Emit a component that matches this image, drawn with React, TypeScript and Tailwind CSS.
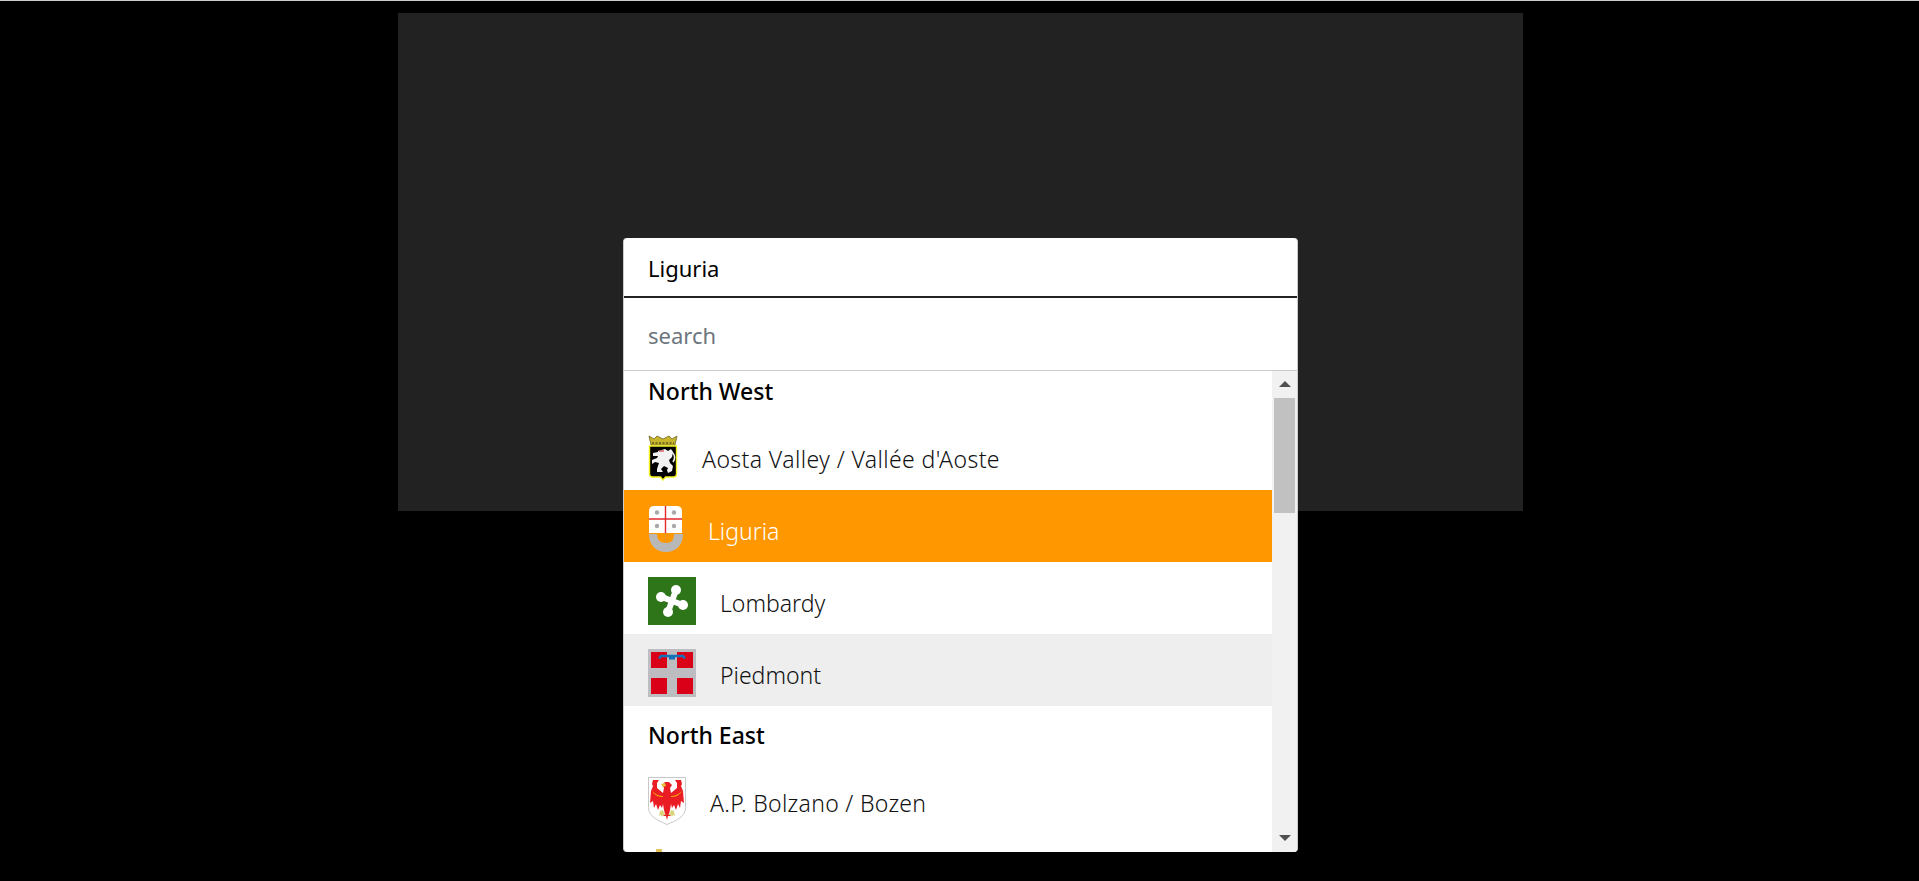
import React from "react";

function AostaIcon() {
  return (
    <svg width="30" height="48" viewBox="0 0 30 48" className="shrink-0">
      <path d="M1 3l5 3 3-3 6 3 6-3 3 3 5-3-2 9H3z" fill="#c9b52c" stroke="#6b6420" strokeWidth="0.8" />
      <path d="M4 10h22" stroke="#5c5a20" strokeWidth="1.500" strokeDasharray="2 1.500" />
      <path d="M1.500 13h27v28c0 2-1 3-3 3h-8l-2.500 3-2.500-3h-8c-2 0-3-1-3-3z" fill="#000" stroke="#f4ef1c" strokeWidth="1.400" />
      <path d="M10 18l7-2 3 2 3-2 2 3-1 5-3 3 1 3 3 3-1 5-4 2-1-3 1-2-4-2-3 3 2 3-6 0 0-3 2-6-4-1-3 2 0-4 5-2 1-2-5 0 0-3 5-1z" fill="#f2f2f2" />
      <path d="M11 18h5" stroke="#c22" strokeWidth="1" />
      <path d="M24 19c3 3 3 7 1 10" stroke="#f2f2f2" strokeWidth="1.500" fill="none" />
    </svg>
  );
}

function LiguriaIcon() {
  return (
    <svg width="36" height="48" viewBox="0 0 36 48" className="shrink-0">
      <path d="M1 6c0-3 2-5 5-5h23c3 0 5 2 5 5v22H1z" fill="#fff" />
      <path d="M17.500 1v27M1 14h33" stroke="#e22a2a" strokeWidth="1.400" />
      <path d="M1 29h8c0 6 3 9 9 9s8-3 8-9h9c0 11-7 18-17 18S1 40 1 29z" fill="#b8b8b8" />
      <path d="M17.500 29v9" stroke="#d99b3a" strokeWidth="0.800" />
      <g fill="#a9a9a9">
        <circle cx="9" cy="7.500" r="2.200" />
        <circle cx="26" cy="7.500" r="2.200" />
        <circle cx="9" cy="21" r="2.200" />
        <circle cx="26" cy="21" r="2.200" />
      </g>
    </svg>
  );
}

function LombardyIcon() {
  return (
    <svg width="48" height="48" viewBox="0 0 48 48" className="shrink-0">
      <rect width="48" height="48" fill="#2e7519" />
      <path d="M24 24L14 20M24 24L28 13M24 24L20 35M24 24L35 28" stroke="#fff" strokeWidth="6" strokeLinecap="round" />
      <g fill="#fff">
        <circle cx="13" cy="20" r="5" />
        <circle cx="28" cy="13" r="5" />
        <circle cx="20" cy="35" r="5" />
        <circle cx="35" cy="28" r="5" />
      </g>
    </svg>
  );
}

function PiedmontIcon() {
  return (
    <svg width="48" height="48" viewBox="0 0 48 48" className="shrink-0">
      <rect width="48" height="48" fill="#bdbcc0" />
      <rect x="3" y="3" width="16" height="16" fill="#d90018" />
      <rect x="29" y="3" width="16" height="16" fill="#d90018" />
      <rect x="3" y="29" width="16" height="16" fill="#d90018" />
      <rect x="29" y="29" width="16" height="16" fill="#d90018" />
      <path d="M11 9.500L13 7H35L37 9.500" stroke="#1672b8" strokeWidth="2.500" fill="none" />
      <rect x="21" y="7" width="6" height="3.500" fill="#1672b8" />
    </svg>
  );
}

function BolzanoIcon() {
  return (
    <svg width="38" height="48" viewBox="0 0 38 48" className="shrink-0">
      <path d="M.5.500h37v30c0 9-9 13-18.500 17C10 43.500.5 39.500.5 30.500z" fill="#fff" stroke="#c8c8c8" />
      <path
        d="M17 5L21 5L24 8L22 11L23 16L29 11L29 6L27 3L33 3L34 7L33 9L35 14L36 26L33 24L32 31L30 27L28 33L26 28L24 31L23 27L22 33L21 37L23 39L20 39L19 43L18 39L15 39L17 37L16 33L15 27L14 31L12 28L10 33L8 27L6 31L5 24L2 26L3 14L5 9L4 7L5 3L11 3L9 6L9 11L15 16L16 11L14 8Z"
        fill="#ea1c24"
      />
      <path d="M4 14c4 4 8 5 11 5l0 1c-4 0-8-1-11-6zM34 14c-4 4-8 5-11 5l0 1c4 0 8-1 11-6z" fill="#f5a800" />
      <path d="M13 7l4-1 1 3-3 1z" fill="#e8c23a" />
      <path d="M12 34l3-1 1 3 2 2-3 0-1 2-1-2-2 1zM26 34l-3-1-1 3-2 2 3 0 1 2 1-2 2 1z" fill="#d8d47a" />
    </svg>
  );
}

function Region({
  icon,
  name,
  className = "",
}: {
  icon: React.ReactNode;
  name: string;
  className?: string;
}) {
  return (
    <div className={`flex h-[72px] items-start pl-6 pt-[15px] text-[23px] font-light text-[#111111] ${className}`}>
      {icon}
      <span className="ml-6 mt-[11px] leading-[30px]">{name}</span>
    </div>
  );
}

export default function App() {
  return (
    <div className="relative h-[881px] overflow-hidden border-t border-[#cccccc] bg-black font-['Noto_Sans','Open_Sans',sans-serif]">
      <div className="ml-[398px] mt-3 h-[498px] w-[1125px] bg-[#222222]" />

      {/* Select dropdown, open over the panel */}
      <div className="absolute left-[623px] top-[237px] flex h-[614px] w-[675px] flex-col overflow-hidden rounded-[4px] border-x border-[#cccccc] bg-white">
        <div className="flex h-[58px] shrink-0 items-center pl-6 pt-[3px] text-[22px] text-black">
          Liguria
        </div>
        <div className="h-[2px] shrink-0 bg-[#222222]" />
        <div className="flex h-[73px] shrink-0 items-center border-b border-[#cccccc] pl-6 pt-[2px]">
          <input
            placeholder="search"
            className="w-full bg-transparent text-[22px] outline-none placeholder:text-[#6c757d]"
          />
        </div>

        <div className="flex min-h-0 flex-1">
          <div className="min-w-0 flex-1 overflow-hidden">
            <div className="h-[47px] pl-6 pt-[3px] text-[23px] font-medium leading-[34px] text-black">
              North West
            </div>
            <Region icon={<AostaIcon />} name="Aosta Valley / Vallée d'Aoste" className="tracking-[0.4px]" />
            <Region icon={<LiguriaIcon />} name="Liguria" className="bg-[#ff9800] !text-white" />
            <Region icon={<LombardyIcon />} name="Lombardy" />
            <Region icon={<PiedmontIcon />} name="Piedmont" className="bg-[#eeeeee]" />
            <div className="h-[56px] pl-6 pt-[12px] text-[23px] font-medium leading-[34px] text-black">
              North East
            </div>
            <Region icon={<BolzanoIcon />} name="A.P. Bolzano / Bozen" className="tracking-[0.3px]" />
            {/* top of the next crest, the rest is scrolled out of view */}
            <div className="pl-[32px] pt-[15px]">
              <div className="h-[3px] w-[6px] bg-[#e3c35a]" />
            </div>
          </div>

          {/* Scrollbar */}
          <div className="flex w-[25px] shrink-0 flex-col items-center bg-[#f1f1f1]">
            <div className="flex h-[25px] shrink-0 items-center justify-center">
              <div className="h-0 w-0 border-x-[6px] border-b-[6px] border-x-transparent border-b-[#505050]" />
            </div>
            <div className="mt-[2px] h-[115px] w-[21px] shrink-0 bg-[#c1c1c1]" />
            <div className="flex-1" />
            <div className="flex h-[28px] shrink-0 items-center justify-center">
              <div className="h-0 w-0 border-x-[6px] border-t-[6px] border-x-transparent border-t-[#505050]" />
            </div>
          </div>
        </div>
      </div>
    </div>
  );
}
